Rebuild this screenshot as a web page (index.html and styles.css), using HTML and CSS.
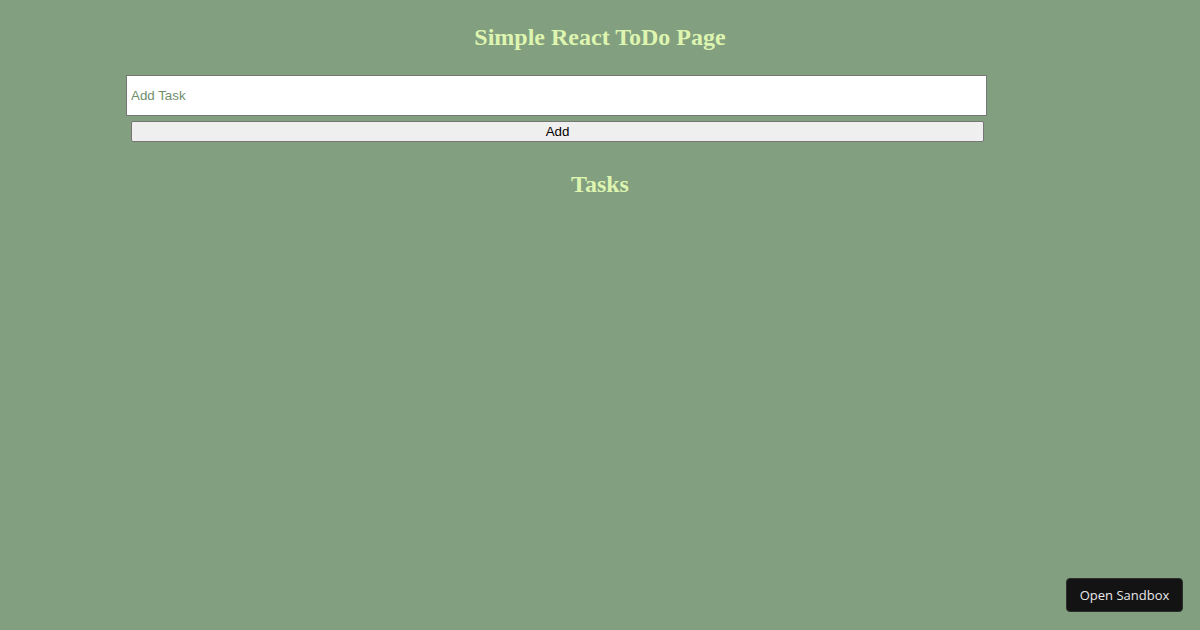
FILE: index.html
```html
<!DOCTYPE html>
<html>
<head>
<meta charset="utf-8">
<title>Simple React ToDo Page</title>
<link rel="stylesheet" href="styles.css">
</head>
<body>
<div class="app">
  <h2 class="title">Simple React ToDo Page</h2>
  <form class="todo-form">
    <input class="task-input" type="text" placeholder="Add Task">
    <button class="add-btn" type="button">Add</button>
  </form>
  <h2 class="title tasks-title">Tasks</h2>
</div>
<a class="sandbox-btn">Open Sandbox</a>
</body>
</html>
```
FILE: styles.css
```css
html, body {
  margin: 0;
  padding: 0;
}
body {
  background: #829f80;
  font-family: "Liberation Serif", "Times New Roman", serif;
  height: 630px;
  overflow: hidden;
}
.app {
  padding: 24px 8px 0 8px;
}
.title {
  margin: 0;
  font-size: 24px;
  font-weight: bold;
  line-height: 27px;
  color: #def5b0;
  text-align: center;
}
.todo-form {
  margin: 24px 0 0 118px;
  width: 861px;
  display: flex;
  flex-direction: column;
  align-items: flex-start;
}
.task-input {
  box-sizing: border-box;
  width: 861px;
  height: 41px;
  margin: 0;
  padding: 0 4px;
  border: 1px solid #767676;
  border-radius: 0;
  background: #ffffff;
  font-family: "Liberation Sans", Arial, sans-serif;
  font-size: 13.33px;
  outline: none;
}
.task-input::placeholder {
  color: #6f8e6c;
  opacity: 1;
}
.add-btn {
  box-sizing: border-box;
  width: 853px;
  height: 21px;
  margin: 5px 0 0 5px;
  padding: 0;
  border: 1px solid #767676;
  border-radius: 2px;
  background: #efefef;
  color: #000;
  font-family: "Liberation Sans", Arial, sans-serif;
  font-size: 13.33px;
}
.tasks-title {
  margin-top: 29px;
}
.sandbox-btn {
  position: fixed;
  right: 17px;
  bottom: 18px;
  box-sizing: border-box;
  width: 117px;
  height: 34px;
  display: flex;
  align-items: center;
  justify-content: center;
  background: #131313;
  border: 1px solid #2e2e2e;
  border-radius: 4px;
  color: #e8e8e8;
  font-family: "Open Sans", "Noto Sans", sans-serif;
  font-size: 13px;
  font-weight: 500;
}
```
